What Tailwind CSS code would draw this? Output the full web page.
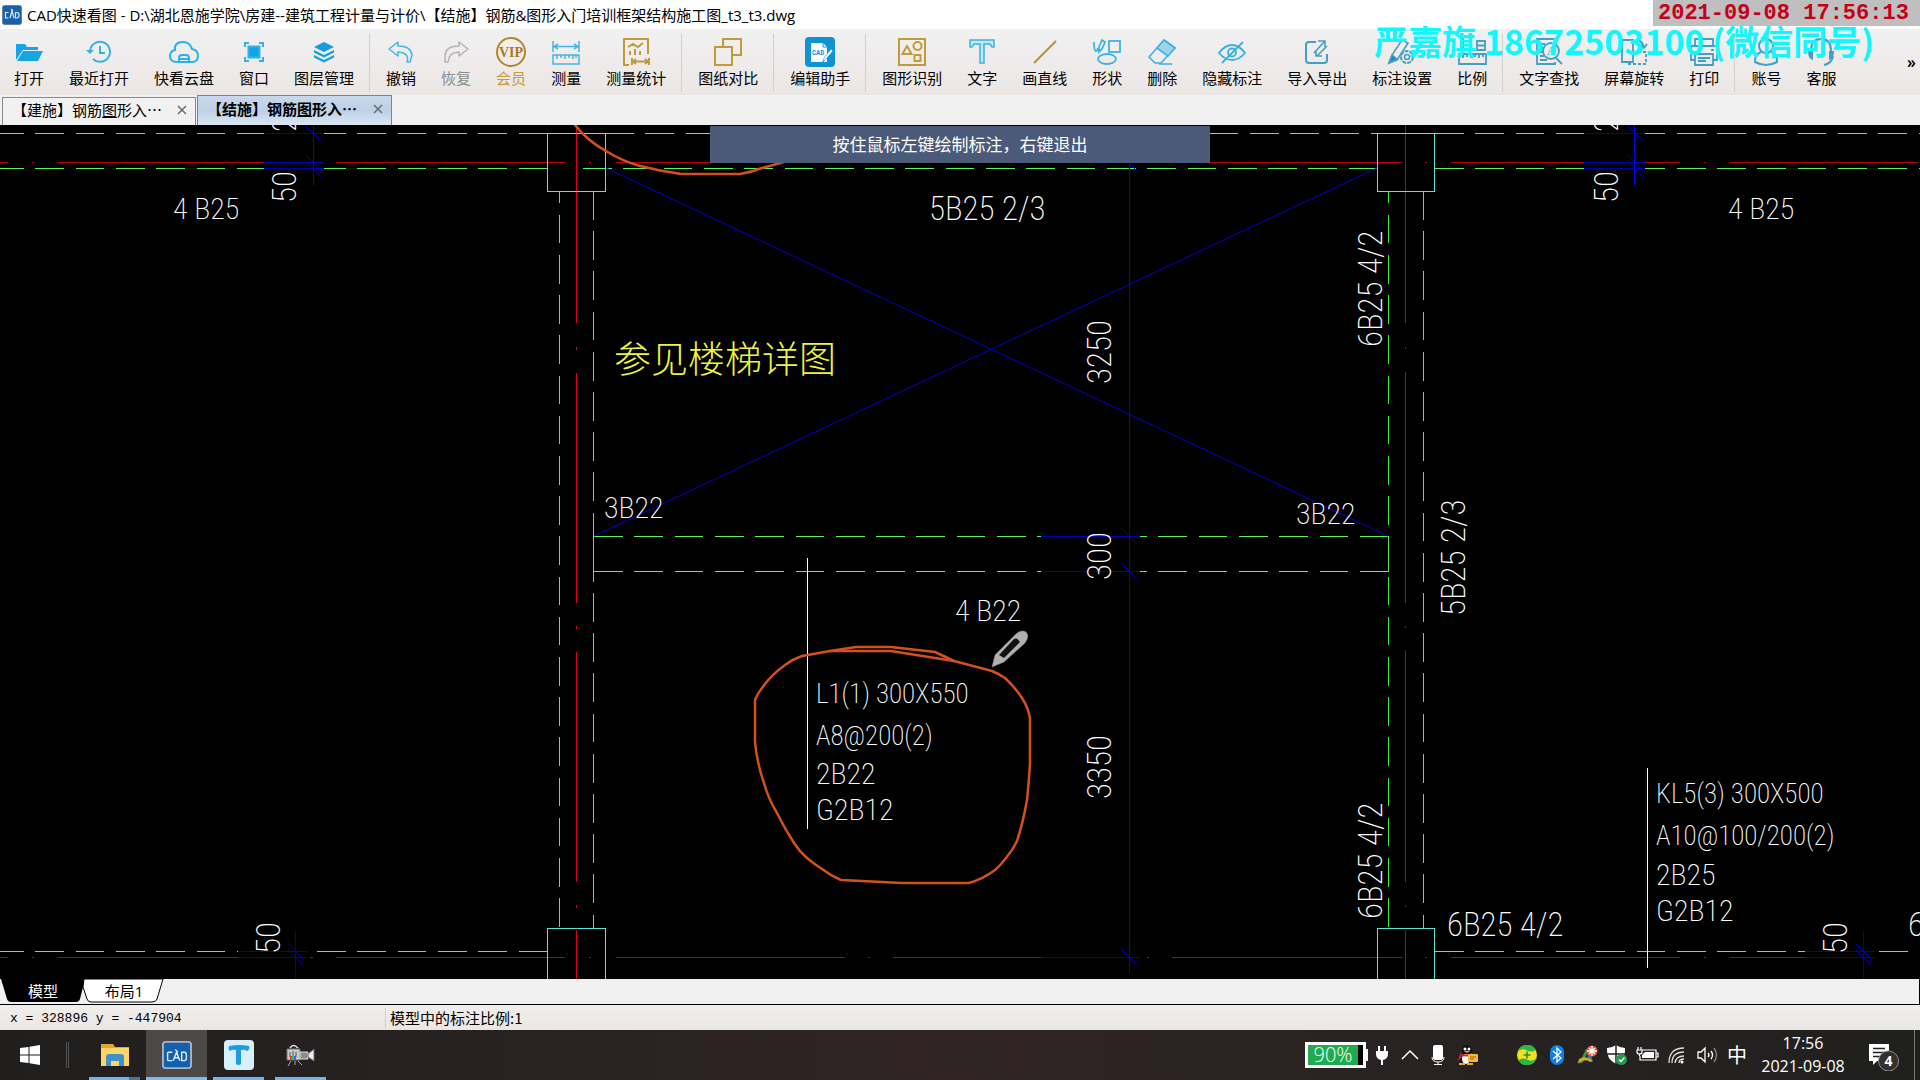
<!DOCTYPE html>
<html lang="zh-CN">
<head>
    <meta charset="UTF-8">
    <meta name="viewport" content="width=device-width, initial-scale=1.0">
    <title>CAD快速看图</title>
    <script src="https://cdn.jsdelivr.net/npm/@tailwindcss/browser@4"></script>
</head>
<body class="h-screen flex flex-col overflow-hidden bg-[#f0f0f0] text-black text-[15px] font-['Open_Sans','Noto_Sans_CJK_SC',sans-serif]">

    <!-- Title bar -->
    <header class="relative h-[29px] shrink-0 bg-white flex items-center pl-[2px] gap-[5px]">
        <svg class="w-5 h-5" viewBox="0 0 20 20">
            <rect x="0.5" y="0.5" width="19" height="19" rx="2" fill="#1761ad" stroke="#6b7f96"/>
            <path d="M6.500 7.500H3.500V13H6.500M8 13L10 6L12 13M13.500 7.500V13H15.500L17 11.500V9L15.500 7.500ZM9 4L11 6" fill="none" stroke="#dbe9f7" stroke-width="1.200"/>
        </svg>
        <h1 class="whitespace-nowrap leading-5">CAD快速看图 - D:\湖北恩施学院\房建--建筑工程计量与计价\【结施】钢筋&amp;图形入门培训框架结构施工图_t3_t3.dwg</h1>
        <!-- Recorder timestamp and watermark -->
        <div class="absolute right-0 top-0 h-[26px] w-[267px] bg-[#bfbfbf] pl-[5px] text-[22px] leading-[28px] font-bold whitespace-nowrap text-[#c4001c] font-['Liberation_Mono',monospace]">2021-09-08 17:56:13</div>
        <div class="absolute right-[46px] top-[24px] z-10 pointer-events-none text-[34px] leading-[34px] font-bold whitespace-nowrap text-[#12f6fc] font-['Noto_Sans_CJK_SC',sans-serif]">严嘉旗 18672503100 (微信同号)</div>
    </header>

    <!-- Toolbar -->
    <nav class="h-[66px] shrink-0 flex items-start gap-px pl-[2px] pt-[5px] bg-gradient-to-b from-[#f1f1f1] to-[#ebe6e4] leading-4 whitespace-nowrap">
        <button class="px-3 flex flex-col items-center">
            <svg class="w-[30px] h-9" viewBox="0 0 30 36" fill="#17a6e3"><path d="M2 26V10H11L13 13H24V16H9Z"/><path d="M3 27L9 17H29L24 27Z"/></svg>
            打开
        </button>
        <button class="px-3 flex flex-col items-center">
            <svg class="w-[30px] h-9" viewBox="0 0 30 36" fill="none" stroke="#35b2e2" stroke-width="2"><path d="M6 17A10 10 0 1 1 9 25M16 12V19H21"/><path d="M2 16H10L6 20Z" fill="#35b2e2" stroke="none"/></svg>
            最近打开
        </button>
        <button class="px-3 flex flex-col items-center">
            <svg class="w-[30px] h-9" viewBox="0 0 30 36" fill="none" stroke="#2bb2ea" stroke-width="2"><path d="M8 28Q1 28 1 22Q1 17 6 16Q5 8 14 8Q21 8 23 15Q29 16 29 22Q29 28 23 28Z"/><path d="M10 28V24Q10 21 13 21H17Q20 21 20 24V28M10 25H20"/></svg>
            快看云盘
        </button>
        <button class="px-3 flex flex-col items-center">
            <svg class="w-[30px] h-9" viewBox="0 0 30 36" fill="none" stroke="#35b2e2" stroke-width="2"><path d="M6 13V9H10M20 9H24V13M24 23V27H20M10 27H6V23"/><rect x="9.500" y="12.500" width="11" height="11" fill="#12a4e6"/></svg>
            窗口
        </button>
        <button class="px-3 flex flex-col items-center">
            <svg class="w-[30px] h-9" viewBox="0 0 30 36" fill="#149fdc"><path d="M15 8L25 13L15 18L5 13Z"/><path d="M5 16L15 21L25 16V18.500L15 23.500L5 18.500Z"/><path d="M5 21L15 26L25 21V23.500L15 28.500L5 23.500Z"/></svg>
            图层管理
        </button>
        <span class="w-[3px] mr-[3px] h-[58px] border-r border-[#d2d0ce]"></span>
        <button class="px-3 flex flex-col items-center">
            <svg class="w-[30px] h-9" viewBox="0 0 30 36" fill="none" stroke="#45b5e4" stroke-width="1.500" stroke-linejoin="round"><path d="M3 15L12 8V12Q25 12 26 21L24 28H21Q24 19 12 18V22Z"/></svg>
            撤销
        </button>
        <button class="px-3 flex flex-col items-center text-[#8d8d8d]">
            <svg class="w-[30px] h-9" viewBox="0 0 30 36" fill="none" stroke="#b4b4b4" stroke-width="1.500" stroke-linejoin="round"><path d="M27 15L18 8V12Q5 12 4 21L4 28H7Q8 18 18 18V22Z"/></svg>
            恢复
        </button>
        <button class="px-3 flex flex-col items-center text-[#c79a32]">
            <svg class="w-[30px] h-9" viewBox="0 0 30 36"><circle cx="15" cy="18" r="14" fill="none" stroke="#b5852a" stroke-width="2"/><text x="15" y="23" text-anchor="middle" font-family="Liberation Serif, serif" font-weight="bold" font-size="14" fill="#a87918">VIP</text></svg>
            会员
        </button>
        <button class="px-3 flex flex-col items-center">
            <svg class="w-[30px] h-9" viewBox="0 0 30 36" fill="none" stroke="#45b5e4" stroke-width="1.500"><path d="M2 7V18M28 7V18M3 12.500H27M7 10L3 12.500L7 15M23 10L27 12.500L23 15M2 21H28V30H2ZM6 21V25M10 21V24M14 21V25M18 21V24M22 21V25M25 21V24"/></svg>
            测量
        </button>
        <button class="px-3 flex flex-col items-center">
            <svg class="w-[30px] h-9" viewBox="0 0 30 36" fill="none" stroke="#bf9b3c" stroke-width="2"><path d="M27 20V5H3V31H8M7 13L12 10L17 13L22 9M9 17V21M14 15V21M19 17V21M11 24V31M12 27.500H26M15 25L12 27.500L15 30M24 25L27 27.500L24 30M28 24V31"/></svg>
            测量统计
        </button>
        <span class="w-[3px] mr-[3px] h-[58px] border-r border-[#d2d0ce]"></span>
        <button class="px-3 flex flex-col items-center">
            <svg class="w-[30px] h-9" viewBox="0 0 30 36" fill="none" stroke="#bf9b3c" stroke-width="2"><path d="M10 13V5H28V21H19"/><path d="M2 13H19V31H2Z"/></svg>
            图纸对比
        </button>
        <span class="w-[3px] mr-[3px] h-[58px] border-r border-[#d2d0ce]"></span>
        <button class="px-3 flex flex-col items-center">
            <svg class="w-[30px] h-9" viewBox="0 0 30 36"><rect x="0" y="3" width="30" height="30" rx="4" fill="#0e94d2"/><path d="M6 9H18L22 13V28H6Z" fill="#fff"/><path d="M18 9V13H22M27 16L19 26L17 29" stroke="#0e94d2" fill="none"/><path d="M28 17L21 25L18 28L19 24L26 15Z" fill="#fff" stroke="#0e94d2" stroke-width="0.600"/><text x="7" y="21" font-family="Roboto Condensed, sans-serif" font-weight="bold" font-size="7" fill="#0e94d2">CAD</text></svg>
            编辑助手
        </button>
        <span class="w-[3px] mr-[3px] h-[58px] border-r border-[#d2d0ce]"></span>
        <button class="px-3 flex flex-col items-center">
            <svg class="w-[30px] h-9" viewBox="0 0 30 36" fill="none" stroke="#bf9b3c" stroke-width="2"><rect x="2" y="5" width="26" height="26"/><path d="M10 12L14.500 20H5.500Z"/><circle cx="20.500" cy="12" r="4"/><rect x="17.500" y="21" width="6" height="6"/></svg>
            图形识别
        </button>
        <button class="px-3 flex flex-col items-center">
            <svg class="w-[30px] h-9" viewBox="0 0 30 36" fill="#c5e6f3" stroke="#3bb3e6" stroke-width="1.500"><path d="M3 6H27V13H25L23 10H17V29H13V10H7L5 13H3Z"/></svg>
            文字
        </button>
        <button class="px-3 flex flex-col items-center">
            <svg class="w-[30px] h-9" viewBox="0 0 30 36" stroke="#b8923a" stroke-width="2"><path d="M4 29L26 7"/></svg>
            画直线
        </button>
        <button class="px-3 flex flex-col items-center">
            <svg class="w-[30px] h-9" viewBox="0 0 30 36" fill="none" stroke="#3bb3e6" stroke-width="1.800"><path d="M2 8C2 20 5 18 6 14M7 13L10 6L13 8L10 15L7 18Z"/><rect x="17" y="7" width="11" height="11"/><ellipse cx="15" cy="25" rx="9" ry="5"/></svg>
            形状
        </button>
        <button class="px-3 flex flex-col items-center">
            <svg class="w-[30px] h-9" viewBox="0 0 30 36" fill="none" stroke="#3bb3e6" stroke-width="1.600" stroke-linejoin="round"><path d="M2 23L17 6L28 14L14 29H8Z"/><path d="M10 14L21 22L28 14L17 6Z" fill="#9fd3ea"/><path d="M12 30H25"/></svg>
            删除
        </button>
        <button class="px-3 flex flex-col items-center">
            <svg class="w-[30px] h-9" viewBox="0 0 30 36" fill="none" stroke="#35b2e2" stroke-width="1.800"><path d="M2 19Q8 11 15 11Q22 11 28 19Q22 26 15 26Q8 26 2 19Z"/><circle cx="15" cy="18.500" r="4"/><path d="M5 29L26 8"/></svg>
            隐藏标注
        </button>
        <button class="px-3 flex flex-col items-center">
            <svg class="w-[30px] h-9" viewBox="0 0 30 36" fill="none" stroke="#449fc6" stroke-width="2"><path d="M14 8H7Q4 8 4 11V26Q4 29 7 29H22Q25 29 25 26V20"/><path d="M12 19L22 8M16 7H23V13M25 12L15 22M14 16V22H20" stroke-width="1.600"/></svg>
            导入导出
        </button>
        <button class="px-3 flex flex-col items-center">
            <svg class="w-[30px] h-9" viewBox="0 0 30 36" fill="none" stroke="#449fc6" stroke-width="1.600"><path d="M2 29L5 21L15 6L21 9L10 26Z"/><path d="M2 29L5 21L10 25Z" fill="#1d83b8"/><circle cx="20" cy="23" r="6" stroke-width="2" stroke-dasharray="4 1"/><circle cx="20" cy="23" r="2.500"/></svg>
            标注设置
        </button>
        <button class="px-3 flex flex-col items-center">
            <svg class="w-[30px] h-9" viewBox="0 0 30 36" fill="none" stroke="#449fc6" stroke-width="1.800"><path d="M4 8L6 6V16M14 9V10M14 14V15M20 7H28V16H20ZM20 11.500H28M2 20H29V30H2ZM6 20V24M10 20V23M14 20V24M18 20V23M22 20V24M26 20V23"/></svg>
            比例
        </button>
        <span class="w-[3px] mr-[3px] h-[58px] border-r border-[#d2d0ce]"></span>
        <button class="px-3 flex flex-col items-center">
            <svg class="w-[30px] h-9" viewBox="0 0 30 36" fill="none" stroke="#449fc6" stroke-width="1.800"><path d="M21 7V5H3V30H21V28M6 10H11M6 14H9M6 18H9M6 22H10M6 26H13M22 24L28 30"/><circle cx="17" cy="17" r="8"/><text x="17" y="21" text-anchor="middle" font-family="Liberation Serif, serif" font-size="12" fill="#449fc6" stroke="none">A</text></svg>
            文字查找
        </button>
        <button class="px-3 flex flex-col items-center">
            <svg class="w-[30px] h-9" viewBox="0 0 30 36" fill="none" stroke="#449fc6" stroke-width="1.800"><path d="M3 6H14V28H3Z"/><path d="M9 30H27V18H14" stroke-dasharray="3 2"/><path d="M18 6Q24 7 25 14M21 11L25 14L28 10"/></svg>
            屏幕旋转
        </button>
        <button class="px-3 flex flex-col items-center">
            <svg class="w-[30px] h-9" viewBox="0 0 30 36" fill="none" stroke="#449fc6" stroke-width="1.800"><path d="M6 11V5H24V11M6 26H2V12H28V26H24M6 20H24V31H6ZM9 24H21M9 27H17M22 16H25"/></svg>
            打印
        </button>
        <span class="w-[3px] mr-[3px] h-[58px] border-r border-[#d2d0ce]"></span>
        <button class="px-3 flex flex-col items-center">
            <svg class="w-[30px] h-9" viewBox="0 0 30 36" fill="none" stroke="#449fc6" stroke-width="2"><circle cx="15" cy="12" r="7"/><path d="M10 18Q3 21 4 28Q15 34 26 28Q27 21 20 18"/></svg>
            账号
        </button>
        <button class="px-3 flex flex-col items-center">
            <svg class="w-[30px] h-9" viewBox="0 0 30 36" fill="none" stroke="#449fc6" stroke-width="2"><path d="M5 17Q5 5 15 5Q25 5 25 17M27 22Q26 29 18 31"/><path d="M2 17H7V26Q2 25 2 17ZM28 17H23V26Q28 25 28 17Z" fill="#449fc6" stroke="none"/></svg>
            客服
        </button>
        <button class="ml-auto mr-1 mt-[18px] text-[16px] font-semibold leading-5">»</button>
    </nav>

    <!-- Drawing tabs -->
    <div class="h-[30px] shrink-0 flex items-end gap-px pl-[2px] whitespace-nowrap">
        <div class="h-7 w-[194px] flex items-center justify-between pl-[9px] pr-2 pb-1 border border-b-0 border-[#8a8a8a] bg-[#f1f1f1]">
            <button class="font-['Noto_Sans_CJK_SC',sans-serif] text-[15px] leading-5">【建施】钢筋<u>图</u>形入…</button>
            <button class="text-[#6b6b6b]" aria-label="关闭"><svg class="w-[10px] h-[10px]" viewBox="0 0 10 10" stroke="currentColor" stroke-width="1.500"><path d="M1 1L9 9M9 1L1 9"/></svg></button>
        </div>
        <div class="h-[30px] w-[195px] flex items-center justify-between pl-[9px] pr-2 pb-1 border border-b-0 border-[#6d87ab] bg-gradient-to-b from-[#c9d9ec] via-[#bdd0e6] to-[#dbe6f2]">
            <button class="font-['Noto_Sans_CJK_SC',sans-serif] text-[15px] leading-5 font-bold">【结施】钢筋<u>图</u>形入…</button>
            <button class="text-[#6b6b6b]" aria-label="关闭"><svg class="w-[10px] h-[10px]" viewBox="0 0 10 10" stroke="currentColor" stroke-width="1.500"><path d="M1 1L9 9M9 1L1 9"/></svg></button>
        </div>
    </div>

    <!-- Drawing canvas -->
    <main class="relative flex-1 min-h-0 bg-black">
        <svg class="block w-full h-full" viewBox="0 125 1920 854" preserveAspectRatio="xMidYMin slice" fill="none">
            <!-- axes -->
            <g stroke="#b80012" stroke-width="1" shape-rendering="crispEdges">
                <path d="M0 162.500H8M32 162.500H34M58 162.500H264M336 162.500H565M589 162.500H591M616 162.500H845M869 162.500H871M893 162.500H1124M1147 162.500H1149M1172 162.500H1402M1425 162.500H1427M1451 162.500H1584M1645 162.500H1680M1704 162.500H1706M1730 162.500H1918"/>
                <path d="M0 957.500H8M32 957.500H34M58 957.500H238M310 957.500H313M336 957.500H565M589 957.500H591M616 957.500H845M868 957.500H870M893 957.500H1041M1147 957.500H1149M1172 957.500H1402M1425 957.500H1427M1451 957.500H1680M1704 957.500H1706M1730 957.500H1805"/>
                <path stroke="#e00018" d="M576.500 125V323M576.500 347V350M576.500 373V603M576.500 626V629M576.500 652V882M576.500 905V908M576.500 930V979"/>
                <path stroke="#8a1622" d="M1405.500 125V323M1405.500 347V349M1405.500 372V603M1405.500 626V628M1405.500 650V882M1405.500 905V907M1405.500 930V979"/>
            </g>
            <!-- beams -->
            <g stroke="#5cf25c" stroke-dasharray="28.700 11.600" shape-rendering="crispEdges">
                <path d="M-5 133.500H264M-5 168.500H264M-5 951.500H238"/>
                <path stroke-dashoffset="6.900" d="M324 133.500H547M324 168.500H547"/>
                <path stroke-dashoffset="40.300" d="M317 951.500H547"/>
                <path d="M605 133.500H1377M583 168.500H1377"/>
                <path d="M1435 133.500H1584M1435 168.500H1584M1435 951.500H1805"/>
                <path stroke-dashoffset="8.500" d="M1645 133.500H1920M1645 168.500H1920"/>
                <path stroke-dashoffset="36" d="M1875 951.500H1920"/>
                <path d="M594 536.500H1041M594 571.500H1041"/>
                <path stroke-dashoffset="22" d="M1140 536.500H1388M1140 571.500H1388"/>
            </g>
            <g stroke="#58e858" stroke-dasharray="28.700 11.500" shape-rendering="crispEdges">
                <path stroke-dashoffset="16.500" d="M559.500 191V928"/>
                <path d="M593.500 191V928"/>
                <path stroke="#35f035" stroke-dashoffset="16.500" d="M1388.500 191V928"/>
                <path d="M1423.500 191V928"/>
                <path stroke-dasharray="none" d="M593.500 514V582M1388.500 536V572"/>
            </g>
            <!-- dimensions -->
            <g stroke="#0000e0">
                <path stroke="#0000d4" d="M606 168L1388 536M594 536L1377 168"/>
                <g shape-rendering="crispEdges">
                    <path stroke="#0000f0" d="M1129.500 163V973M313.500 125V186M1634.500 125V186"/>
                    <path d="M295.500 932V979M1863.500 932V979" stroke="#0000a8"/>
                    <path stroke="#0000b8" d="M264 133.500H324M264 162.500H324M264 168.500H324M1584 133.500H1645M1584 162.500H1645M1584 168.500H1645M238 951.500H307M238 957.500H307M1805 951.500H1875M1805 957.500H1875M1041 536.500H1140M1041 571.500H1140M1041 957.500H1140"/>
                </g>
                <path stroke="#0000b8" d="M305 125L321 141M305 154L321 171M305 160L321 177M1627 125L1643 141M1627 154L1643 171M1627 160L1643 177M288 943L303 959M288 949L303 965M1855 943L1871 959M1855 949L1871 965M1121 528L1137 544M1121 563L1137 579M1121 949L1137 965M1121 155L1137 171"/>
            </g>
            <!-- columns -->
            <g stroke="#5fe6d2" shape-rendering="crispEdges">
                <rect x="547.500" y="133.500" width="58" height="58"/>
                <rect x="1377.500" y="133.500" width="57" height="58"/>
                <rect x="547.500" y="928.500" width="58" height="58"/>
                <rect x="1377.500" y="928.500" width="57" height="58"/>
            </g>
            <!-- leader lines -->
            <path stroke="#fff" shape-rendering="crispEdges" d="M807.500 558V829M1647.500 768V968"/>
            <!-- reinforcement labels -->
            <g fill="#fff" font-family="Roboto Condensed, sans-serif" font-weight="200" font-size="33">
                <text x="929" y="220">5B25 2/3</text>
                <text x="1447" y="936">6B25 4/2</text>
                <text x="1908" y="936">6B25 4/2</text>
                <text transform="translate(296 203) rotate(-90)">50</text>
                <text transform="translate(296 132) rotate(-90)">200</text>
                <text transform="translate(1618 203) rotate(-90)">50</text>
                <text transform="translate(1618 132) rotate(-90)">200</text>
                <text transform="translate(280 954) rotate(-90)">50</text>
                <text transform="translate(1847 954) rotate(-90)">50</text>
                <text transform="translate(1111 384) rotate(-90)">3250</text>
                <text transform="translate(1111 580) rotate(-90)">300</text>
                <text transform="translate(1111 799) rotate(-90)">3350</text>
                <text transform="translate(1382 347) rotate(-90)">6B25 4/2</text>
                <text transform="translate(1382 919) rotate(-90)">6B25 4/2</text>
                <text transform="translate(1465 616) rotate(-90)">5B25 2/3</text>
                <g font-size="30">
                    <text x="173" y="219">4 B25</text>
                    <text x="1728" y="219">4 B25</text>
                    <text x="604" y="518">3B22</text>
                    <text x="1296" y="524">3B22</text>
                    <text x="955" y="621">4 B22</text>
                    <text x="816" y="784">2B22</text>
                    <text x="816" y="820">G2B12</text>
                    <text x="1656" y="885">2B25</text>
                    <text x="1656" y="921">G2B12</text>
                </g>
                <g font-size="27">
                    <text x="816" y="703">L1(1) 300X550</text>
                    <text x="816" y="745">A8@200(2)</text>
                    <text x="1656" y="803">KL5(3) 300X500</text>
                    <text x="1656" y="845">A10@100/200(2)</text>
                </g>
            </g>
            <text x="614" y="373" fill="#eef53c" font-family="Noto Sans CJK SC, sans-serif" font-weight="300" font-size="37">参见楼梯详图</text>
            <!-- freehand markup -->
            <g stroke="#d4511b" stroke-width="2.500" stroke-linejoin="round" stroke-linecap="round">
                <path d="M575 125L582 133Q593 144 606 151Q622 161 640 166Q660 171 681 174H740Q752 172 762 168L784 162"/>
                <path d="M954 661L992 671Q999 674 1005 678Q1015 687 1022 698Q1028 707 1030 718V763Q1029 781 1027 800Q1023 823 1017 841Q1013 850 1006 858Q1001 865 995 870Q983 879 969 883H902L841 880Q831 876 822 869Q814 864 807 858Q799 851 794 843Q785 829 777 813Q768 798 764 783Q757 763 755 742V700Q757 694 762 688Q771 675 785 665Q793 659 802 656L830 651L856 647H891L935 652L954 661"/>
                <path d="M830 651H891L954 661"/>
            </g>
            <!-- pencil cursor -->
            <path fill="#b3afaf" stroke="#8e8a8a" stroke-width="0.500" d="M992 667L995 655L1016 634Q1021 629 1026 632Q1030 636 1025 643L1004 662Z"/>
            <path fill="#111" d="M999 655L1014 639Q1017 637 1020 642L1004 658Z"/>
        </svg>
        <div class="absolute top-px left-1/2 -translate-x-1/2 w-[500px] h-[37px] bg-[#4a5a78] text-white text-[17px] leading-[35px] text-center whitespace-nowrap font-['Noto_Sans_CJK_SC',sans-serif]">按住鼠标左键绘制标注，右键退出</div>
    </main>

    <!-- Layout tabs -->
    <div class="h-[26px] shrink-0 flex items-start border-b border-r border-black text-[15px] leading-6">
        <div class="relative flex">
            <svg class="absolute left-0 top-0 w-[164px] h-6" viewBox="0 0 164 24"><path d="M1 0L7 20Q8 23 11 23H76Q79 23 80 20L85 0Z" fill="#000"/><path d="M84 0L83 8L87 20Q88 23 91 23H152Q156 23 157 20L163 0Z" fill="#fff" stroke="#000"/></svg>
            <button class="relative w-[86px] h-6 text-white">模型</button>
            <button class="relative w-[76px] h-6">布局1</button>
        </div>
    </div>

    <!-- Status bar -->
    <footer class="h-[25px] shrink-0 flex items-center bg-gradient-to-b from-[#f0efec] to-[#eae6e3]">
        <span class="w-[385px] pl-[10px] pt-[2px] text-[13px] font-['Liberation_Mono',monospace]">x = 328896 y = -447904</span>
        <span class="border-l border-[#d0cecb] pl-1 leading-5 font-['Noto_Sans_CJK_SC',sans-serif]">模型中的标注比例:1</span>
    </footer>

    <!-- Windows taskbar -->
    <div class="h-[50px] shrink-0 flex items-stretch text-white bg-gradient-to-r from-[#201f1d] via-[#302426] to-[#20201f]">
        <button class="w-[60px] flex items-center justify-center" aria-label="开始">
            <svg class="w-5 h-5" viewBox="0 0 20 20" fill="#fff"><path d="M0 3L8.500 2V9.500H0ZM9.500 1.800L20 0V9.500H9.500ZM0 10.500H8.500V18L0 17ZM9.500 10.500H20V20L9.500 18.200Z"/></svg>
        </button>
        <span class="ml-[6px] my-3 w-[3px] border-x border-[#555]"></span>
        <button class="relative ml-5 w-[51px] flex items-center justify-center" aria-label="文件资源管理器">
            <svg class="w-7 h-6" viewBox="0 0 28 24"><path d="M0 1H12L14 4H28V23H0Z" fill="#e0a92e"/><path d="M0 5H28V23H0Z" fill="#fcd667"/><path d="M5 23V14Q5 11 8 11H20Q23 11 23 14V23H18V18H10V23Z" fill="#3f8fcb"/></svg>
            <span class="absolute bottom-0 inset-x-0 h-[3px] bg-[#76b3e3] border-r-[11px] border-[#4b7595]"></span>
        </button>
        <button class="relative ml-[6px] w-[61px] flex items-center justify-center bg-[#4b4a49]" aria-label="CAD快速看图">
            <svg class="w-[30px] h-[30px]" viewBox="0 0 32 30"><rect x="1" y="1" width="30" height="28" rx="3" fill="#145fae" stroke="#a9b4c0" stroke-width="2"/><path d="M11 12H7Q6 12 6 13V20Q6 21 7 21H11M12 21L15.500 12L19 21M13 18H18M21 12V21H24Q26 21 26 18V15Q26 12 24 12ZM14 9L17 12" fill="none" stroke="#dcebfa" stroke-width="1.500"/></svg>
            <span class="absolute bottom-0 inset-x-0 h-[3px] bg-[#7cbbec]"></span>
        </button>
        <button class="relative ml-[6px] w-[51px] flex items-center justify-center" aria-label="T">
            <svg class="w-[30px] h-[30px]" viewBox="0 0 30 30"><rect width="30" height="30" rx="4" fill="#d8effc"/><path d="M5 6Q15 4 25 6Q26 10 23 11Q20 9 17 10V24Q15 26 12 24V10Q8 9 6 11Q4 10 5 6Z" fill="#1b9de2"/></svg>
            <span class="absolute bottom-0 inset-x-0 h-[3px] bg-[#76b3e3]"></span>
        </button>
        <button class="relative ml-[11px] w-[51px] flex items-center justify-center" aria-label="录像机">
            <svg class="w-8 h-6" viewBox="0 0 32 24"><path d="M5 5Q8 0 13 5" fill="none" stroke="#ddd" stroke-width="1.500"/><path d="M2 6H15V17H2Z" fill="#c9c9c9" stroke="#777"/><path d="M5 9V14M8 8V15M11 9V14" stroke="#555"/><path d="M15 9H23V16H15Z" fill="#8c8c8c" stroke="#ddd"/><path d="M23 11L29 6V18L23 14Z" fill="#eee" stroke="#666"/><rect x="5" y="13" width="2" height="4" fill="#e33"/><rect x="7" y="13" width="2" height="4" fill="#3c3"/><rect x="9" y="13" width="2" height="4" fill="#36f"/><path d="M6 18L3 23M10 18V22M13 18L17 22" stroke="#aaa"/></svg>
            <span class="absolute bottom-0 inset-x-0 h-[3px] bg-[#76b3e3]"></span>
        </button>

        <div class="ml-auto flex items-center">
            <div class="h-[26px] w-[61px] border-[3px] border-white bg-black pr-[5px]">
                <div class="h-5 bg-[#21ab50] text-[20px] leading-5 text-center font-light">90%</div>
            </div>
            <span class="w-[2px] h-3 bg-white"></span>
            <svg class="w-7 h-5" viewBox="0 0 28 20" fill="#fff"><path d="M10 1H12V6H16V1H18V6H20V9Q20 14 15 15V20H13V15Q8 14 8 9V6H10Z"/></svg>
            <button class="w-7" aria-label="显示隐藏的图标"><svg class="w-7 h-5" viewBox="0 0 28 20" fill="none" stroke="#fff" stroke-width="1.500"><path d="M6 14L14 6L22 14"/></svg></button>
            <svg class="w-7 h-5" viewBox="0 0 28 20"><rect x="9" y="0" width="10" height="15" rx="2" fill="#fff"/><path d="M8 12Q8 17 14 17Q20 17 20 12M14 17V19M10 19.500H18" fill="none" stroke="#fff"/></svg>
            <svg class="w-[30px] h-5" viewBox="0 0 30 20"><ellipse cx="14" cy="13" rx="7" ry="6.500" fill="#111"/><ellipse cx="15" cy="5" rx="5" ry="5" fill="#111"/><circle cx="13" cy="4" r="1.500" fill="#fff"/><circle cx="17" cy="4" r="1.500" fill="#fff"/><path d="M12 6H18L15 8Z" fill="#f5a623"/><ellipse cx="14" cy="14" rx="4" ry="5" fill="#fff"/><path d="M8 8Q14 11 20 8V10Q14 13 8 10ZM8 9L6 16L10 12Z" fill="#e0242b"/><path d="M7 18H13V20H7ZM15 18H21V20H15Z" fill="#f5a623"/><rect x="16" y="9" width="10" height="8" rx="1" fill="#f7b93a"/><path d="M18 12H24M18 14H22" stroke="#a8660c"/></svg>
            <svg class="ml-[30px] w-[30px] h-5" viewBox="0 0 30 20"><circle cx="15" cy="10" r="10" fill="#f3e11c"/><path d="M5.500 7A10 10 0 0 1 24 5Q19 8 14 5Q9 3 5.500 7ZM24.500 13A10 10 0 0 1 6 15Q11 12 16 15Q21 17 24.500 13Z" fill="#32b34a"/><path d="M15 6.500V13.500M11.500 10H18.500" stroke="#1a9a3a" stroke-width="1.600"/></svg>
            <svg class="w-[30px] h-5" viewBox="0 0 30 20"><rect x="8" y="0" width="14" height="20" rx="7" fill="#0b7fe6"/><path d="M11 6L19 13L15 17V3L19 7L11 14" fill="none" stroke="#fff" stroke-width="1.300"/></svg>
            <svg class="w-[30px] h-5" viewBox="0 0 30 20"><path d="M5 18Q9 16 14 4L17 4L11 17Q9 19 5 18Z" fill="#3f9a3f"/><path d="M14 4L18 5L21 17H17Z" fill="#1b7fb5"/><path d="M7 14Q14 10 20 15L19 17Q13 13 6 18Z" fill="#d8a62a"/><circle cx="20" cy="6" r="5.500" fill="#e2562c"/><path d="M20 1V11M15 6H25M17 3L23 9M23 3L17 9" stroke="#fff" stroke-width="1.300"/></svg>
            <svg class="w-[30px] h-5" viewBox="0 0 30 20"><path d="M14 0Q18 3 23 3Q24 14 14 19Q4 14 5 3Q10 3 14 0Z" fill="#fff"/><path d="M14 0V19M5 9H23" stroke="#222" stroke-width="1.500"/><circle cx="19.500" cy="14.500" r="5.500" fill="#239a4c"/><path d="M17 14.500L19 16.500L22.500 12.500" fill="none" stroke="#fff" stroke-width="1.300"/></svg>
            <svg class="w-[30px] h-5" viewBox="0 0 30 20" fill="none" stroke="#fff" stroke-width="1.200"><path d="M10 5H24V15H8V11M24 8H26V12H24"/><path d="M13 7H22V13H10V10Z" fill="#fff" stroke="none"/><path d="M6 2V5M9 2V5M5 5H10V7Q10 9 7.500 9Q5 9 5 7ZM7.500 9V11"/></svg>
            <svg class="w-[30px] h-5" viewBox="0 0 30 20" fill="none" stroke="#ddd" stroke-width="1.300"><path d="M7 18Q7 3 22 3M10 18Q10 7 22 7M13 18Q14 11 22 11M17 18Q17 14 22 14"/><circle cx="20" cy="17" r="1.500" fill="#fff" stroke="none"/></svg>
            <svg class="w-[30px] h-5" viewBox="0 0 30 20" fill="none" stroke="#fff" stroke-width="1.300"><path d="M6 7H9L13 3V17L9 13H6ZM16 8Q18 10 16 12M19 6Q22 10 19 14"/><path stroke="#888" d="M22 3Q27 10 22 17"/></svg>
            <button class="w-[30px] text-[20px] leading-5 font-['Noto_Sans_CJK_SC',sans-serif]">中</button>
        </div>
        <button class="w-[102px] flex flex-col items-center justify-center text-[16px] leading-[23px]"><span>17:56</span><span>2021-09-08</span></button>
        <button class="w-[60px] flex items-center justify-center" aria-label="通知">
            <svg class="w-8 h-8" viewBox="0 0 32 32"><path d="M1 5H21V22H9L5 26V22H1Z" fill="#fff"/><path d="M5 9.500H17M5 13.500H17M5 17.500H14" stroke="#222" stroke-width="1.300"/><circle cx="20.500" cy="22" r="10" fill="#33302f" stroke="#8b8a89"/><text x="20.500" y="27" text-anchor="middle" font-family="Open Sans, sans-serif" font-weight="bold" font-size="14" fill="#fff">4</text></svg>
        </button>
        <span class="w-[6px] border-l border-[#777]"></span>
    </div>
</body>
</html>
